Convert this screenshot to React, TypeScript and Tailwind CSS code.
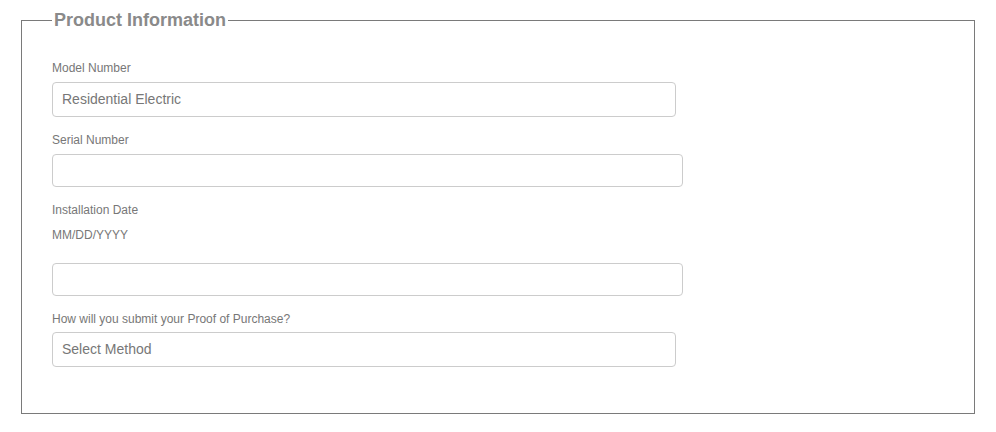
export default function App() {
  return (
    <div className="min-h-screen bg-white pt-[9px] px-[21px] font-['Liberation_Sans',Arial,sans-serif]">
      <fieldset className="w-[954px] border border-[#7a7a7a] px-[30px] pb-[46px] pt-[29px]">
        <legend className="px-[2px] text-[18px] leading-[22px] font-bold text-[#8a8a8a]">
          Product Information
        </legend>

        <label className="block text-[12px] leading-[17px] text-[#777]">Model Number</label>
        <div className="mt-[5px] w-[624px] h-[35px] flex items-center px-[9px] border border-[#ccc] rounded-[4px] text-[14px] text-[#777]">
          Residential Electric
        </div>

        <label className="mt-[15px] block text-[12px] leading-[17px] text-[#777]">Serial Number</label>
        <input
          type="text"
          className="mt-[5px] block w-[631px] h-[33px] px-[9px] border border-[#ccc] rounded-[4px] text-[14px] text-[#777] outline-none"
        />

        <label className="mt-[15px] block text-[12px] leading-[17px] text-[#777]">Installation Date</label>
        <p className="mt-[8px] text-[12px] leading-[17px] text-[#777]">MM/DD/YYYY</p>
        <input
          type="text"
          className="mt-[19px] block w-[631px] h-[33px] px-[9px] border border-[#ccc] rounded-[4px] text-[14px] text-[#777] outline-none"
        />

        <label className="mt-[15px] block text-[12px] leading-[17px] text-[#777]">
          How will you submit your Proof of Purchase?
        </label>
        <div className="mt-[4px] w-[624px] h-[35px] flex items-center px-[9px] border border-[#ccc] rounded-[4px] text-[14px] text-[#777]">
          Select Method
        </div>
      </fieldset>
    </div>
  );
}
